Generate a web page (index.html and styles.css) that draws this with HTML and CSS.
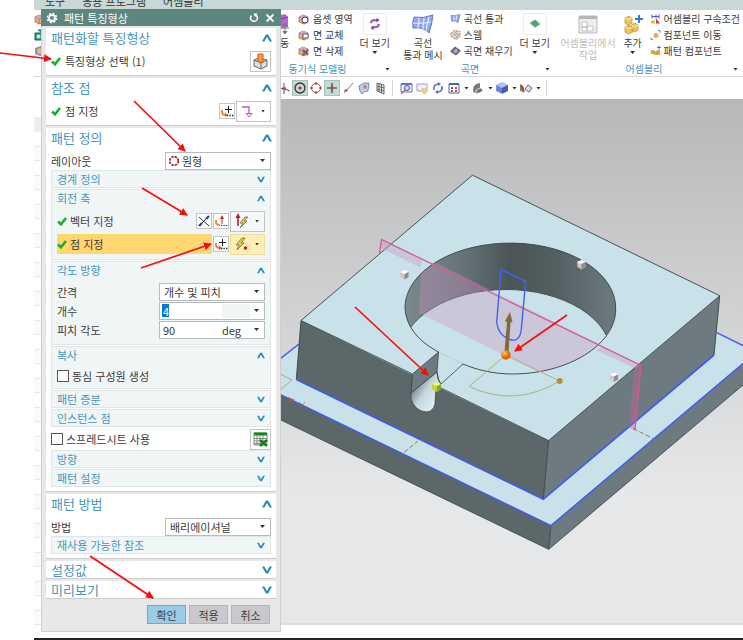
FILE: index.html
```html
<!DOCTYPE html>
<html lang="ko">
<head>
<meta charset="utf-8">
<meta name="viewport" content="width=device-width, initial-scale=1">
<title>패턴 특징형상</title>
<link rel="stylesheet" href="styles.css">
</head>
<body>
<svg class="defs" width="0" height="0" aria-hidden="true">
  <symbol id="check" viewBox="0 0 10 10"><path d="M1 5.5 4 8.3 9 2" fill="none" stroke="#1fae2e" stroke-width="2.6"/></symbol>
  <symbol id="up" viewBox="0 0 10 8"><path d="M0 7.500 3.900.5h2.200L10 7.500H7.600L5 3 2.400 7.500z" fill="#2a8abf"/></symbol>
  <symbol id="down" viewBox="0 0 10 8"><path d="M0 .5 3.900 7.500h2.200L10 .5H7.600L5 5 2.400.5z" fill="#2a8abf"/></symbol>
  <symbol id="point-dialog" viewBox="0 0 14 14"><path d="M2 6v2q0 3 4 3" fill="none" stroke="#e88a3c" stroke-width="2"/><path d="m5 8.500 3 2.500-3 2z" fill="#d9692a"/><path d="M5 5.500h7M8.500 2v7" stroke="#222"/><path d="M7 11.500h1.300M9.500 11.500h1.300M12 11.500h1.300" stroke="#222" stroke-width="1.400"/></symbol>
  <symbol id="block" viewBox="0 0 12 12"><path d="m1 4 4-2 5 2v5l-4 2-5-2z" fill="#efb45c" stroke="#9b6a7e" stroke-width=".8"/><path d="m1 4 4 2v5M5 6l5-2" fill="none" stroke="#a85a70" stroke-width=".8"/><path d="m1 4 4-2 5 2-5 2z" fill="#c9a5da"/></symbol>
  <symbol id="cube" viewBox="0 0 12 12"><path d="m1 3.500 5-2.500 5 2.500v5L6 11 1 8.500z" fill="#6d7fd2"/><path d="m1 3.500 5-2.500 5 2.500L6 6z" fill="#b4bff2"/><path d="M6 6v5l5-2.500v-5z" fill="#4758b5"/></symbol>
</svg>

<div class="app">
  <nav class="menu"><a href="#">도구</a><a href="#">응용 프로그램</a><a href="#">어셈블리</a></nav>

  <header class="ribbon">
    <section class="group edge" aria-label="특징형상">
      <svg width="12" height="12"><use href="#block"/></svg>
      <svg width="12" height="12" viewBox="0 0 12 12"><path d="M1 4h7v7H1zM4 1h7v7" fill="#2e9c80" stroke="#17604e"/><circle cx="4.500" cy="7.500" r="2" fill="#cfe9df"/></svg>
      <svg width="12" height="12" viewBox="0 0 12 12"><path d="m1 3 6-2 4 2v7l-5 1-5-2z" fill="#7e8fd8"/><circle cx="6" cy="6" r="3" fill="#f0b36a"/></svg>
    </section>
    <section class="group sync">
      <div class="tools">
        <button class="big">
          <svg width="22" height="22" viewBox="0 0 22 22"><path d="m7 3 9-2 3 3v10l-8 2-4-3z" fill="#b565d0"/><path d="m7 3 4 3 8-2M11 6v10" fill="none" stroke="#7f359c"/><path d="M16 11v9M12 15h8M16 10l-2 2.500h4zM16 21l-2-2.500h4z" fill="#888" stroke="#777"/></svg>
          <span>이동</span>
        </button>
        <div class="list">
          <button><svg width="12" height="12"><use href="#block"/><circle cx="7" cy="7" r="3" fill="#fff" stroke="#444"/></svg>옵셋 영역</button>
          <button><svg width="12" height="12"><use href="#block"/><path d="M5 5h5v4H5z" fill="#fff" stroke="#666"/></svg>면 교체</button>
          <button><svg width="12" height="12"><use href="#block"/><path d="m5 5 5 5M10 5l-5 5" stroke="#555" stroke-width="1.300"/></svg>면 삭제</button>
        </div>
        <button class="big more">
          <svg width="24" height="22" viewBox="0 0 24 22"><path d="M7.500 10q1-4 5-3l3-.5M16.500 11q-1 4-5 3.500l-3 .5" fill="none" stroke="#a05abf" stroke-width="2.400"/><path d="m14 4 3 3-4 2zM10 18l-3-3 4-2z" fill="#8a40ac"/></svg>
          <span>더 보기</span><i class="caret"></i>
        </button>
      </div>
      <footer><span>동기식 모델링</span><i class="caret"></i></footer>
    </section>
    <section class="group">
      <div class="tools">
        <button class="big wide">
          <svg width="22" height="22" viewBox="0 0 22 22"><path d="M2 4q9 2 19-2-1 9-4 18-4-6-16-5Q0 9 2 4z" fill="#92a8e8" stroke="#5c76c9"/><path d="M1 10q9 1 18-1M7 5l-1 10M12 5l-1 11M17 4l-3 13" fill="none" stroke="#e7edff" stroke-width="1.200"/></svg>
          <span>곡선<br>통과 메시</span>
        </button>
        <div class="list">
          <button><svg width="11" height="12" viewBox="0 0 11 11"><path d="M1 2q5 1 9-1L8 9Q5 6 2 8z" fill="#92a8e8" stroke="#6a82d0" stroke-width=".8"/><path d="M4 3v4M7 2 6 7" stroke="#eef"/></svg>곡선 통과</button>
          <button><svg width="11" height="12" viewBox="0 0 11 11"><path d="m1 4 3-3 6 1 0 5-4 3-5-3z" fill="#d8d8d8" stroke="#d46a45" stroke-dasharray="2 1"/><path d="m3 4 5 4M5 3l4 3" stroke="#999"/></svg>스웹</button>
          <button><svg width="11" height="12" viewBox="0 0 11 11"><path d="M0 6 5 1l6 4-5 5z" fill="#5567a8"/><path d="m3 6 3-3 2 2-2 3z" fill="#f0a93b"/></svg>곡면 채우기</button>
        </div>
        <button class="big more">
          <svg width="24" height="22" viewBox="0 0 24 22"><path d="m6 10 6-4 6 5-6 4z" fill="#68ad86"/><path d="m9 9 5 4M11 8l5 4M9 12l5-4" stroke="#3f835e" stroke-width=".7"/></svg>
          <span>더 보기</span><i class="caret"></i>
        </button>
      </div>
      <footer><span>곡면</span><i class="caret"></i></footer>
    </section>
    <section class="group assembly">
      <div class="tools">
        <button class="big wide" disabled>
          <svg width="22" height="22" viewBox="0 0 22 22"><path d="M2 3h18v17H2z" fill="#eee" stroke="#b5b5b5"/><path d="M2 3h18v3H2z" fill="#b5b5b5"/><path d="M5 9h5v5H5zM5 14h5v4H5zM10 13h6v5h-6z" fill="#fff" stroke="#c0c0c0"/></svg>
          <span>어셈블리에서<br>작업</span>
        </button>
        <button class="big">
          <svg width="22" height="22" viewBox="0 0 22 22"><path d="m3 5 4-2 3 2v5l-4 2-3-2zM3 14l4-2 4 2v5l-4 2-4-2zM9 12l4-2 3 2v5l-3 2-4-2z" fill="#eec35a" stroke="#c69533" stroke-width=".8"/><path d="m3 5 3 2 4-2M3 14l4 2 4-2M9 12l4 2 3-2" fill="none" stroke="#fff2c0"/><path d="M17 2v8M13 6h8" stroke="#3976e0" stroke-width="2"/></svg>
          <span>추가</span><i class="caret"></i>
        </button>
        <div class="list">
          <button><svg width="11" height="12" viewBox="0 0 11 11"><path d="M2 1v4M9 1v4M2 3h7M6 1v4" stroke="#4659bb"/><path d="M1 7h4v3H1z" fill="#efb94f"/><path d="m6 5 4 5H6z" fill="#c43a34"/></svg>어셈블리 구속조건</button>
          <button><svg width="11" height="12" viewBox="0 0 11 11"><circle cx="6" cy="6" r="2.500" fill="#e8b24b"/><path d="M1 8v2h2M8 1h2v2" fill="none" stroke="#6d87cb"/></svg>컴포넌트 이동</button>
          <button><svg width="11" height="12" viewBox="0 0 11 11"><path d="M1 5h3v3H1zM4 6h3v3H4zM7 5h3v4H7z" fill="#e9a640" stroke="#c78a31" stroke-width=".5"/><path d="M9 0v4M7 2h4" stroke="#3976e0"/></svg>패턴 컴포넌트</button>
        </div>
      </div>
      <footer><span>어셈블리</span><i class="caret"></i></footer>
    </section>
  </header>

  <div class="toolbar">
    <button aria-label="교차점"><svg viewBox="0 0 14 14"><path d="M1 8q5-2 12 2M7 2v11" fill="none" stroke="#555"/><path d="M5 7.500h4" stroke="#c33" stroke-width="2"/></svg></button>
    <button class="on" aria-label="원호 중심"><svg viewBox="0 0 14 14"><circle cx="7" cy="7" r="5" fill="none" stroke="#333" stroke-width="1.300"/><circle cx="7" cy="7" r="1.600" fill="#c22"/></svg></button>
    <button aria-label="사분점"><svg viewBox="0 0 14 14"><circle cx="7" cy="7" r="4.500" fill="none" stroke="#666"/><path d="M6 2.500h2M6 11.500h2M2.500 6v2M11.500 6v2" stroke="#d22" stroke-width="2"/></svg></button>
    <button class="on" aria-label="기존 점"><svg viewBox="0 0 14 14"><path d="M2 7h10M7 2v10" stroke="#333" stroke-width="1.200"/><circle cx="7" cy="7" r="1.400" fill="#c33"/></svg></button>
    <button aria-label="곡선상의 점"><svg viewBox="0 0 14 14"><path d="m3 12 9-10" stroke="#777"/><path d="M3.500 9.500h3" stroke="#c33" stroke-width="2"/></svg></button>
    <button aria-label="면상의 점"><svg viewBox="0 0 14 14"><path d="M2 5q4-4 10-3l-1 8q-4 0-6 3-3-3-3-8z" fill="#b6cfe6" stroke="#6d93c0"/><circle cx="8" cy="6" r="1.700" fill="#de6a4f"/></svg></button>
    <button aria-label="경계 그리드"><svg viewBox="0 0 14 14"><path d="m4 2 7 2v9l-7-3z" fill="#eee" stroke="#666"/><path d="m4 5 7 2M4 8l7 2M6 2v9M8.500 3v9" stroke="#666"/></svg></button>
    <i class="rule"></i>
    <button aria-label="창 확대"><svg viewBox="0 0 14 14"><path d="M2 3h11v8H2z" fill="#eef" stroke="#6677bb"/><path d="M2 3h11" stroke="#6677bb" stroke-width="2"/><circle cx="8" cy="7" r="2.500" fill="#cfe4ff" stroke="#556"/><path d="m6 9-4 4" stroke="#c66" stroke-width="1.400"/></svg></button>
    <button aria-label="이동 보기"><svg viewBox="0 0 14 14"><path d="M2 3h10v7H2z" fill="#f0f1f8" stroke="#9aa1c0"/><path d="M7 7h4l2 3-2 3H8L6 9z" fill="#efcf82"/></svg></button>
    <button aria-label="회전"><svg viewBox="0 0 14 14"><path d="M3 9q-1-6 5-6M11 5q1 6-5 6" fill="none" stroke="#556fb8" stroke-width="1.600"/><path d="m7 1 3 2-3 2zM7 13l-3-2 3-2z" fill="#556fb8"/></svg></button>
    <button aria-label="방향 뷰"><svg viewBox="0 0 14 14"><path d="M2 3h10v9H2z" fill="#fff" stroke="#4b62a8"/><path d="M2 3h10" stroke="#4b62a8" stroke-width="2"/><path d="M4 6h2v2H4zM8 6h2v2H8zM4 9h2v2H4zM8 9h2v2H8z" fill="#c44"/></svg></button><i class="caret"></i>
    <button aria-label="렌더링"><svg viewBox="0 0 14 14"><path d="M2 9q0-6 7-7v5l3 2q-3 4-7 3-3 0-3-3z" fill="#777"/><path d="m9 7-4 2v3" fill="none" stroke="#ddd"/></svg></button><i class="caret"></i>
    <button aria-label="뷰"><svg viewBox="0 0 12 12"><use href="#cube"/></svg></button><i class="caret"></i>
    <button aria-label="표시"><svg viewBox="0 0 14 14"><path d="M1 3v7l4 1V6z" fill="#3bab54"/><path d="m2 4 3 7" stroke="#d33" stroke-width="2"/><path d="m6 8 3-4 4 3-3 4z" fill="#dde" stroke="#668"/></svg></button><i class="caret"></i>
    <i class="rule"></i>
  </div>

  <main class="work">
    <aside class="navigator"></aside>
    <svg class="scene" viewBox="280 99 463 525" preserveAspectRatio="xMinYMin slice" role="img" aria-label="모델 뷰">
      <defs>
        <linearGradient id="wall" x1="405" x2="616" y1="0" y2="0" gradientUnits="userSpaceOnUse"><stop offset="0" stop-color="#7b898d"/><stop offset=".25" stop-color="#68767a"/><stop offset=".5" stop-color="#4b5557"/><stop offset=".72" stop-color="#545f62"/><stop offset="1" stop-color="#6d7b80"/></linearGradient>
        <linearGradient id="slot" x1="411" y1="388" x2="434" y2="403" gradientUnits="userSpaceOnUse"><stop offset="0" stop-color="#69767a"/><stop offset=".5" stop-color="#c3d6dc"/><stop offset="1" stop-color="#d9edf2"/></linearGradient>
        <radialGradient id="orange" cx=".35" cy=".3"><stop offset="0" stop-color="#ffc36a"/><stop offset="1" stop-color="#dd6500"/></radialGradient>
        <clipPath id="hole"><path d="M438.500 352C414 339 405 322 405 306A105.400 65 0 0 1 615.700 310C615 345 568 374 512 374 494 374 477 370 463 364z"/></clipPath>
        <g id="handle"><path d="m-4-2.500 5-2 3.500 2v5l-4 2.500-4-2.500z" fill="#c8c8c8"/><path d="m-4-2.500 5-2 3.500 2-4 2z" fill="#fff"/><path d="M.5-.5v5.500l4-2.500v-5z" fill="#8d8d8d"/></g>
      </defs>
      <path d="M280 359 299 344 717 333 743 346V363.500L551 525.600 280 394.300z" fill="#c9e2e9"/>
      <path d="M280 394.300 551 525.600 548.700 549.300 280 419.600z" fill="#5b6768"/>
      <path d="M551 525.600 743 363.500V385L548.700 549.300z" fill="#6d7b80"/>
      <path d="M280 419.600 548.700 549.300 743 385M551 525.600l-2.300 23.700" fill="none" stroke="#343c3d" stroke-width=".8"/>
      <path d="M280 359 299 344M716.700 332.700 743 345.700M280 394.300 551 525.600 743 363.500" fill="none" stroke="#405cf0" stroke-width="1.500"/>
      <path d="m280 374 12 6-12 10" fill="none" stroke="#9b8380" stroke-width=".7"/>
      <path d="m288 397 7 3-5 2z" fill="#a85656"/><path d="m299 402 6 5M305 402l-4 5" stroke="#a85656" stroke-width=".6"/>
      <path d="m301 320.500 247.600 120.100-5.300 58.700L296.300 379.500z" fill="#5b6768"/>
      <path d="M548.600 440.600 719.700 295.700 714 355 543.300 499.300z" fill="#6d7b80"/>
      <path d="m301 320.500 171.500-145.300 247.200 120.500-171.100 144.900z" fill="#c9e2e9"/>
      <path d="m412.500 374-111.500-53.500 171.500-145.300 247.200 120.500-171.100 144.900L441 388M301 320.500l-4.700 59M548.600 440.600l-5.300 58.700M719.700 295.700 714 355" fill="none" stroke="#394344" stroke-width=".9"/>
      <path d="M296.300 379.500 543.300 499.300 714 355" fill="none" stroke="#405cf0" stroke-width="1.700"/>
      <g clip-path="url(#hole)">
        <path d="M400 230h220v150H400z" fill="url(#wall)"/>
        <ellipse cx="506" cy="355.500" rx="105.500" ry="66" fill="#c9e2e9" stroke="#465052"/>
        <path d="m422 256 219 109-100 8.500L419 313z" fill="#cd96c3" fill-opacity=".35"/>
      </g>
      <path d="M438.500 352C414 339 405 322 405 306A105.400 65 0 0 1 615.700 310C615 345 568 374 512 374 494 374 477 370 463 364" fill="none" stroke="#394344" stroke-width=".9"/>
      <path d="m381.500 239.500 41 20-2 8-41-20z" fill="#cd96c3" fill-opacity=".4"/>
      <path d="m602 346 38 19-4 4-40-19z" fill="#cd96c3" fill-opacity=".4"/>
      <path d="m641 365-6 66-6-4 5-57z" fill="#cd5f98" fill-opacity=".4"/>
      <path d="m379.500 253 2-13.500L641 365.500 635 430" fill="none" stroke="#d05b92" stroke-width="1.300"/>
      <path d="m412.500 374 26-22-1.500 20-26 21z" fill="#6d7b80" stroke="#394344" stroke-width=".8"/>
      <path d="m411 393 26-21 1 7 3 5-5 4-1 16q-2 8-9 8-11-1-15-13z" fill="url(#slot)" stroke="#394344" stroke-width=".8"/>
      <path d="m437 372 2 9 2 3 22-20" fill="none" stroke="#394344" stroke-width=".8"/>
      <path d="m501 269.500 24.600 12-4.400 49q-2 12-11 9-12-4-13.500-17z" fill="none" stroke="#4460f0" stroke-width="1.400"/>
      <path d="M506 355 469 386.500Q515 408 559.700 381z" fill="none" stroke="#b5ad7c"/>
      <path d="m404 452.500 14-11.500M633 428.500l21 10.500" stroke="#867d55" stroke-dasharray="5 2"/>
      <path d="m504.500 352 2.500-30-2-1 5-9 2.500 10-2 .5-2 29.500z" fill="#7c6c3c"/>
      <circle cx="506" cy="355" r="4.700" fill="url(#orange)"/><circle cx="559.700" cy="381" r="3" fill="#a99345"/>
      <use href="#handle" x="404" y="274.500"/><use href="#handle" x="581" y="264.500"/><use href="#handle" x="613.500" y="377"/>
      <path d="m432 384 5-2 4 2v5l-4 3-5-3z" fill="#b9d63e"/><path d="m432 384 5-2 4 2-4 2z" fill="#eefc8a"/><path d="m437 386 4-2v5l-4 3z" fill="#89a428"/>
    </svg>
  </main>
  <div class="status"></div>
</div>

<form class="dialog" aria-label="패턴 특징형상">
  <header class="title">
    <svg width="12" height="12" viewBox="0 0 12 12"><circle cx="6" cy="6" r="3" fill="none" stroke="#fff" stroke-width="2"/><circle cx="6" cy="6" r="4.600" fill="none" stroke="#fff" stroke-width="1.400" stroke-dasharray="2 1.610"/></svg>
    <h1>패턴 특징형상</h1>
    <button type="button" aria-label="재설정"><svg width="10" height="10" viewBox="0 0 10 10"><path d="M2.500 2.500Q0 6 3.500 8 8 9 8.500 5 8.500 3 6.500 2" fill="none" stroke="#fff" stroke-width="1.400"/><path d="M4.500.5h4L6 4z" fill="#fff"/></svg></button>
    <button type="button" aria-label="닫기"><svg width="10" height="10" viewBox="0 0 10 10"><path d="m1.500 1.500 7 7M8.500 1.500l-7 7" stroke="#fff" stroke-width="1.800"/></svg></button>
  </header>

  <section class="panel">
    <h2>패턴화할 특징형상<svg><use href="#up"/></svg></h2>
    <div class="row tall"><svg class="ck"><use href="#check"/></svg><span class="name">특징형상 선택 (1)</span>
      <button type="button" class="box" aria-label="특징형상 선택"><svg width="17" height="17" viewBox="0 0 17 17"><path d="m2 7 5-2 8 2v6l-6 3-7-3z" fill="#ddd" stroke="#666"/><path d="m2 7 7 3 6-3M9 10v6" fill="none" stroke="#666"/><path d="M6 1h5v7l-2.500 2L6 8z" fill="#f4a52e" stroke="#e04b25"/></svg></button></div>
  </section>

  <section class="panel">
    <h2>참조 점<svg><use href="#up"/></svg></h2>
    <div class="row tall"><svg class="ck"><use href="#check"/></svg><span class="name">점 지정</span>
      <button type="button" class="mini" aria-label="점 다이얼로그"><svg><use href="#point-dialog"/></svg></button>
      <button type="button" class="pick" aria-label="점 유형"><svg viewBox="0 0 16 16"><path d="M2 4h7v7" fill="none" stroke="#b05acb" stroke-width="1.300"/><path d="M6 10.500h6L9 14z" fill="#fff" stroke="#b05acb"/></svg><i class="caret"></i></button></div>
  </section>

  <section class="panel main">
    <h2>패턴 정의<svg><use href="#up"/></svg></h2>
    <div class="row"><label for="layout" class="name">레이아웃</label>
      <div class="combo wide"><svg width="12" height="12" viewBox="0 0 12 12"><circle cx="6" cy="6" r="4.300" fill="none" stroke="#b02228" stroke-width="1.800" stroke-dasharray="2.400 1"/></svg><select id="layout"><option>원형</option></select><i class="caret"></i></div></div>
    <section class="sub"><h3>경계 정의<svg><use href="#down"/></svg></h3></section>
    <section class="sub axis"><h3>회전 축<svg><use href="#up"/></svg></h3>
      <div class="row"><span class="mark"><svg class="ck"><use href="#check"/></svg>벡터 지정</span>
        <button type="button" class="mini" aria-label="방향 반전"><svg viewBox="0 0 14 14"><path d="m2 3 10 9M12 2 2 12" stroke="#333"/><path d="m9 5 3-3M2 12l3-3" stroke="#2b3fc4" stroke-width="2.400"/></svg></button>
        <button type="button" class="mini" aria-label="벡터 다이얼로그"><svg viewBox="0 0 14 14"><path d="M2 6v2q0 3 4 3" fill="none" stroke="#e88a3c" stroke-width="2"/><path d="M8 10V3" stroke="#c22"/><path d="m6 5 2-4 2 4z" fill="#c22"/><path d="M7 11.500h1.300M9.500 11.500h1.300M12 11.500h1.300" stroke="#222"/></svg></button>
        <button type="button" class="pick" aria-label="벡터 유형"><svg viewBox="0 0 16 16"><path d="M4 3v10" stroke="#b3202c" stroke-width="1.600"/><path d="m1.500 5 2.500-5 2.500 5z" fill="#b3202c"/><path d="m11 4-5 6h3l-3 5 7-7h-3l4-4z" fill="#e9cd45" stroke="#756b32" stroke-width=".8"/></svg><i class="caret"></i></button></div>
      <div class="row"><span class="mark active"><svg class="ck"><use href="#check"/></svg>점 지정</span>
        <button type="button" class="mini" aria-label="점 다이얼로그"><svg><use href="#point-dialog"/></svg></button>
        <button type="button" class="pick active" aria-label="점 유형"><svg viewBox="0 0 16 16"><path d="M8 2 2 9h3l-2 5 7-7H7l4-5z" fill="#e9cd45" stroke="#756b32" stroke-width=".8"/><circle cx="11.500" cy="12" r="1.800" fill="#c9201c"/></svg><i class="caret"></i></button></div>
    </section>
    <section class="sub angle"><h3>각도 방향<svg><use href="#up"/></svg></h3>
      <div class="row"><label for="spacing" class="name">간격</label><div class="combo"><select id="spacing"><option>개수 및 피치</option></select><i class="caret"></i></div></div>
      <div class="row"><label for="count" class="name">개수</label><div class="combo"><input id="count" class="selected" value="4"><span class="unit blank"></span><i class="caret"></i></div></div>
      <div class="row"><label for="pitch" class="name">피치 각도</label><div class="combo"><input id="pitch" value="90"><span class="unit">deg</span><i class="caret"></i></div></div>
    </section>
    <section class="sub copy"><h3>복사<svg><use href="#up"/></svg></h3>
      <label class="tick"><input type="checkbox">동심 구성원 생성</label></section>
    <section class="sub"><h3>패턴 증분<svg><use href="#down"/></svg></h3></section>
    <section class="sub"><h3>인스턴스 점<svg><use href="#down"/></svg></h3></section>
    <div class="row sheet"><label class="tick name"><input type="checkbox">스프레드시트 사용</label>
      <button type="button" class="box" aria-label="스프레드시트"><svg width="17" height="17" viewBox="0 0 17 17"><path d="M2 2h13v12H2z" fill="#fff" stroke="#888"/><path d="M2 7.500h13M2 10h13M2 12.500h9M5 4v10M8 4v10M11 4v10" stroke="#888"/><path d="M2 1.500h13v3H2z" fill="#138a1c"/><path d="m8 9 7 6M15 9l-7 6" stroke="#137d1b" stroke-width="2.400"/></svg></button></div>
    <section class="sub"><h3>방향<svg><use href="#down"/></svg></h3></section>
    <section class="sub"><h3>패턴 설정<svg><use href="#down"/></svg></h3></section>
  </section>

  <section class="panel main">
    <h2>패턴 방법<svg><use href="#up"/></svg></h2>
    <div class="row"><label for="method" class="name">방법</label><div class="combo wide"><select id="method"><option>배리에이셔널</option></select><i class="caret"></i></div></div>
    <section class="sub"><h3>재사용 가능한 참조<svg><use href="#down"/></svg></h3></section>
  </section>
  <section class="panel shut"><h2>설정값<svg><use href="#down"/></svg></h2></section>
  <section class="panel shut"><h2>미리보기<svg><use href="#down"/></svg></h2></section>

  <footer class="actions"><button class="primary" type="submit">확인</button><button type="button">적용</button><button type="button">취소</button></footer>
</form>

<svg class="notes" width="743" height="640" aria-hidden="true">
  <defs><marker id="tip" viewBox="0 0 8 8" refX="7" refY="4" markerWidth="8" markerHeight="8" markerUnits="userSpaceOnUse" orient="auto"><path d="M0 0 8 4 0 8z" fill="#f80d0d"/></marker></defs>
  <g stroke="#f80d0d" stroke-width="1.700">
    <path d="m0 53 51 6" marker-end="url(#tip)"/><path d="m134 101 51 50" marker-end="url(#tip)"/><path d="m142 188 45 27" marker-end="url(#tip)"/><path d="m141 268 70-24" marker-end="url(#tip)"/><path d="m90 556 63 42" marker-end="url(#tip)"/><path d="m355 307 73 68" marker-end="url(#tip)"/><path d="m567 315-52 36" marker-end="url(#tip)"/>
  </g>
</svg>
</body>
</html>
```
FILE: styles.css
```css
* { box-sizing: border-box; }

body {
  margin: 0;
  position: relative;
  background: #fff;
  color: #3c3c3c;
  font: 11px/14px "Noto Sans CJK KR", sans-serif;
}

button, input, select {
  margin: 0;
  padding: 0;
  border: 0;
  background: none;
  color: inherit;
  font: inherit;
}

svg { display: block; flex: none; }
h1, h2, h3 { margin: 0; font-weight: 400; }
.defs { position: absolute; }

.caret {
  flex: none;
  width: 5px;
  height: 3px;
  background: #333;
  clip-path: polygon(0 0, 100% 0, 50% 100%);
}

/* Main window */
.app {
  display: flex;
  flex-direction: column;
  min-height: 100vh;
  margin-left: 34px;
}

.menu {
  display: flex;
  align-items: flex-end;
  gap: 17px;
  height: 10px;
  padding: 0 11px 2px;
  overflow: hidden;
  background: #c8d8d6;
}
.menu a { color: #333; text-decoration: none; }

.ribbon {
  display: grid;
  grid-template-columns: 216fr 145fr 160fr 188fr;
  height: 67px;
  border-bottom: 1px solid #d8d8d8;
  font-size: 10px;
  line-height: 12px;
}
.group {
  display: flex;
  flex-direction: column;
  justify-content: space-between;
  min-width: 0;
  padding: 3px 0 0;
}
.group + .group + .group { box-shadow: inset 1px 4px #fff, inset 1px 0 #dcdcdc; }
.group.edge { justify-content: flex-start; gap: 4px; }
.tools { display: flex; justify-content: flex-end; gap: 7px; padding-right: 5px; }
.assembly .tools { gap: 6px; padding-right: 3px; }
.big {
  display: flex;
  flex-direction: column;
  align-items: center;
  gap: 2px;
  white-space: nowrap;
}
.big:disabled { color: #bdbdbd; }
.more svg { border: 1px solid #ececec; border-radius: 2px; }
.list { display: flex; flex-direction: column; gap: 4px; }
.list button { display: flex; align-items: center; gap: 3px; white-space: nowrap; }
.group footer {
  display: flex;
  align-items: center;
  padding: 0 5px 1px 0;
  color: #4795bd;
}
.group footer span { flex: 1; text-align: center; }

.toolbar {
  display: flex;
  align-items: center;
  height: 22px;
  padding-left: 242px;
}
.toolbar button { width: 16px; height: 16px; padding: 1px; }
.toolbar button svg { width: 14px; height: 14px; }
.toolbar .on { background: #c5d9d6; box-shadow: inset 0 0 0 1px #a9c0bc; }
.toolbar .caret { margin: 0 1px 0 2px; }
.rule { width: 1px; height: 16px; margin: 0 5px 0 4px; background: #d4d4d4; }

.work { display: flex; flex: 1; min-height: 0; }
.navigator {
  flex: none;
  width: 246px;
  margin-top: 18px;
  border-top: 15px solid #eee;
  background: repeating-linear-gradient(#fff 0 14px, #e8e8e8 14px 15px, #fafafa 15px 28px, #e8e8e8 28px 29px);
}
.scene {
  flex: 1;
  width: 0;
  height: 526px;
  border-bottom: 2px solid #dcdde0;
  background: linear-gradient(#b7b8ba, #e6e7e9 75%);
}
.status { height: 15px; border-bottom: 2px solid #222; }

/* Floating dialog */
.dialog {
  position: absolute;
  top: 9px;
  left: 41px;
  width: 240px;
  padding: 0 4px 7px;
  border: solid #cfcfcf;
  border-width: 0 1px 1px;
  background: #e8e8e8;
}
.title {
  display: flex;
  align-items: center;
  gap: 6px;
  height: 17px;
  margin: 0 -5px 2px;
  padding: 0 6px 0 5px;
  background: #5d877e;
  color: #fff;
}
.title h1 { flex: 1; font-size: 11px; }

.panel {
  margin-bottom: 2px;
  padding: 0 5px;
  border-bottom: 1px solid #cdcdcd;
  background: #fff;
}
.panel h2 {
  display: flex;
  align-items: center;
  justify-content: space-between;
  height: 19px;
  margin-right: -1px;
  color: #4795bd;
  font-size: 13px;
}
.panel h2 svg { width: 10px; height: 8px; }
.panel.main { padding-bottom: 3px; }
.panel.main h2 { margin-bottom: 4px; }
.panel.shut h2 { height: 17px; }

.row { display: flex; align-items: center; gap: 1px; height: 19px; }
.row.tall { height: 28px; }
.row.sheet { height: 22px; }
.name { flex: 1; }
.ck { width: 10px; height: 10px; margin-right: 3px; }

.sub {
  margin-bottom: 1px;
  border: 1px solid #e0e5e5;
  background: #f0f6f6;
  padding: 0 5px;
}
.sub h3 {
  display: flex;
  align-items: center;
  justify-content: space-between;
  height: 16px;
  color: #4795bd;
  font-size: 11px;
}
.sub h3 svg { width: 8px; height: 7px; }
.axis { padding-bottom: 4px; }
.axis h3 { margin-bottom: 4px; }
.axis .row { height: 22px; }
.axis .row + .row { margin-top: 1px; }
.angle { padding-bottom: 5px; }
.angle h3 { margin-bottom: 4px; }
.copy { padding-bottom: 5px; }
.copy h3 { margin-bottom: 6px; }

.mark { display: flex; flex: 1; align-items: center; height: 20px; }
.mark.active { background: #ffd66f; }

.box, .mini, .pick {
  display: flex;
  align-items: center;
  justify-content: center;
  border: 1px solid #c4c4c4;
  background: #fff;
}
.box { width: 21px; height: 21px; }
.mini { width: 16px; height: 16px; }
.mini svg { width: 14px; height: 14px; }
.pick { justify-content: space-between; width: 35px; height: 21px; padding: 0 5px 0 3px; }
.axis .pick { background: #f5f8f8; }
.pick svg { width: 16px; height: 16px; }
.pick .caret { width: 4px; }
.axis .pick.active { border-color: #f0dda0; background: #ffeeb5; }

.combo {
  display: flex;
  align-items: center;
  width: 106px;
  height: 18px;
  padding: 0 5px 0 2px;
  border: 1px solid #b8bcbc;
  background: #fff;
}
.combo select { flex: 1; width: 0; height: 16px; appearance: none; padding-left: 2px; }
.combo input { flex: 1; width: 0; height: 16px; padding-left: 1px; }
.combo .selected {
  background: linear-gradient(#0b78d6, #0b78d6) 0 center / 7px 13px no-repeat;
  color: #fff;
}
.unit { width: 28px; height: 14px; margin-right: 4px; }
.unit.blank { background: #f0f5f5; }

.tick { display: flex; align-items: center; gap: 3px; }
.tick input {
  appearance: none;
  width: 12px;
  height: 12px;
  border: 1px solid #555;
  background: #fff;
}

.actions {
  display: flex;
  justify-content: flex-end;
  gap: 3px;
  padding: 4px 6px 0;
}
.actions button { width: 39px; height: 19px; border: 1px solid #b6b6ba; background: #c9c9cd; }
.actions .primary { border-color: #70aacb; background: #99cce6; }

/* Callout arrows drawn over the window */
.notes { position: absolute; top: 0; left: 0; pointer-events: none; }
```
